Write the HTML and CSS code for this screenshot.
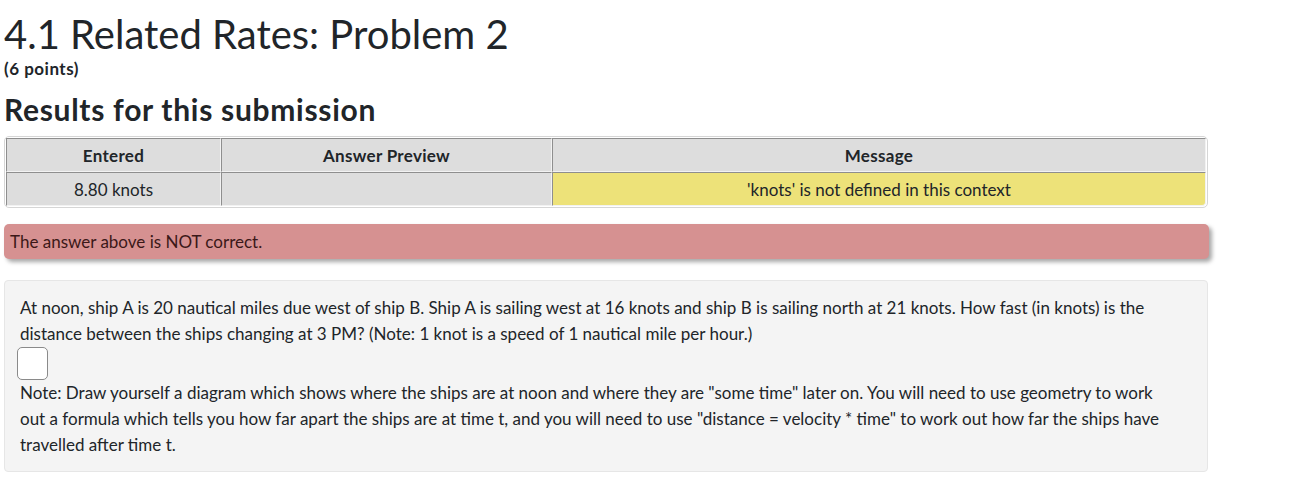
FILE: index.html
```html
<!DOCTYPE html>
<html lang="en">
<head>
<meta charset="utf-8">
<title>4.1 Related Rates: Problem 2</title>
<link rel="stylesheet" href="styles.css">
</head>
<body>
<div class="page">
  <h1 class="title">4.1 Related Rates: Problem 2</h1>
  <div class="points">(6 points)</div>
  <h2 class="results-title">Results for this submission</h2>
  <table class="attempt-results">
    <tr>
      <th class="col-entered">Entered</th>
      <th class="col-preview">Answer Preview</th>
      <th class="col-message">Message</th>
    </tr>
    <tr>
      <td>8.80 knots</td>
      <td></td>
      <td class="msg-warn">'knots' is not defined in this context</td>
    </tr>
  </table>
  <div class="alert-wrong">The answer above is NOT correct.</div>
  <div class="problem">
    <p class="problem-text">At noon, ship A is 20 nautical miles due west of ship B. Ship A is sailing west at 16 knots and ship B is sailing north at 21 knots. How fast (in knots) is the distance between the ships changing at 3 PM? (Note: 1 knot is a speed of 1 nautical mile per hour.)</p>
    <div class="answer-box"></div>
    <p class="problem-text">Note: Draw yourself a diagram which shows where the ships are at noon and where they are "some time" later on. You will need to use geometry to work out a formula which tells you how far apart the ships are at time t, and you will need to use "distance = velocity * time" to work out how far the ships have travelled after time t.</p>
  </div>
</div>
</body>
</html>
```
FILE: styles.css
```css
html, body {
  margin: 0;
  padding: 0;
  background: #ffffff;
}
body {
  font-family: Lato, "Open Sans", sans-serif;
  color: #212529;
  font-size: 17px;
}
.page {
  width: 1204px;
  padding: 0 0 0 4px;
}
.title {
  font-size: 40px;
  font-weight: 400;
  line-height: 44px;
  margin: 12px 0 0 0;
}
.points {
  font-size: 17px;
  font-weight: 700;
  line-height: 20px;
  margin-top: 3px;
  letter-spacing: 0.5px;
}
.results-title {
  font-size: 30px;
  font-weight: 700;
  line-height: 36px;
  margin: 12px 0 0 0;
  letter-spacing: 0.7px;
}
.attempt-results {
  width: 1204px;
  margin-top: 9px;
  border-collapse: separate;
  border-spacing: 0;
  border: 1px solid #d6d6d6;
  border-radius: 5px;
  padding: 1px;
  font-size: 17px;
}
.attempt-results th,
.attempt-results td {
  background: #dddddd;
  border-top: 1px solid #8e8e8e;
  border-left: 1px solid #8e8e8e;
  border-right: 1px solid #f2f2f2;
  border-bottom: 1px solid #f2f2f2;
  height: 32px;
  padding: 0 4px;
  text-align: center;
  vertical-align: middle;
}
.attempt-results th {
  font-weight: 700;
  letter-spacing: 0.3px;
}
.col-entered { width: 205px; }
.col-preview { width: 321px; }
.attempt-results td.msg-warn {
  background: #ede279;
  border-bottom-right-radius: 4px;
}
.alert-wrong {
  margin-top: 16px;
  width: 1193px;
  background: #d69191;
  color: #3b1818;
  border-radius: 5px;
  padding: 0 6px;
  height: 35px;
  line-height: 36px;
  font-size: 17px;
  box-shadow: 3px 3px 4px rgba(0, 0, 0, 0.35);
}
.problem {
  margin-top: 21px;
  box-sizing: border-box;
  width: 1204px;
  background: #f4f4f4;
  border: 1px solid #e6e6e6;
  border-radius: 4px;
  padding: 14px 15px 13px 15px;
}
.problem-text {
  margin: 0;
  max-width: 1145px;
  font-size: 17px;
  line-height: 26px;
}
.answer-box {
  box-sizing: border-box;
  width: 31px;
  height: 33px;
  margin: 0 0 0 -3px;
  background: #ffffff;
  border: 1px solid #8a8a8a;
  border-radius: 5px;
}
```
